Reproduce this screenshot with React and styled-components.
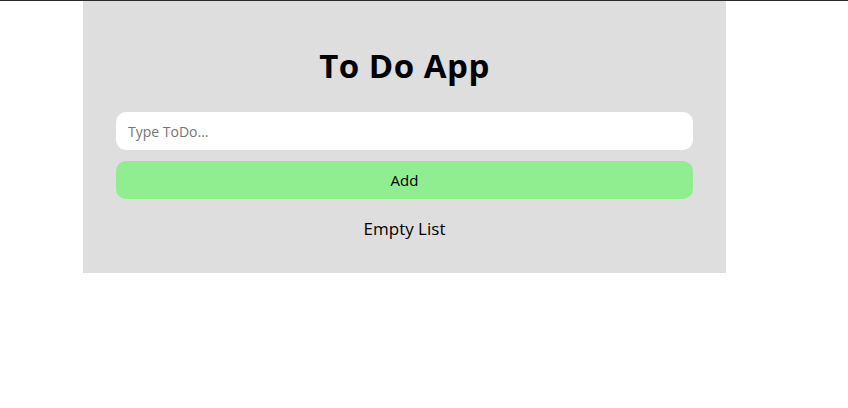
import React, { useState } from 'react';
import styled, { createGlobalStyle } from 'styled-components';

const GlobalStyle = createGlobalStyle`
    html, body {
        margin: 0;
        padding: 0;
        background: #ffffff;
    }
    body {
        font-family: "Open Sans", "Noto Sans", sans-serif;
        border-top: 1px solid #2b2b2b;
    }
`;

const Page = styled.div`
    padding-left: 83px;
`;

const Panel = styled.div`
    width: 643px;
    box-sizing: border-box;
    background: #dedede;
    padding: 45px 33px 32px;
    display: flex;
    flex-direction: column;
    align-items: stretch;
`;

const Title = styled.h1`
    margin: 0 0 26px;
    font-size: 33px;
    line-height: 40px;
    letter-spacing: 0.5px;
    font-weight: 700;
    text-align: center;
    color: #000;
`;

const Input = styled.input`
    height: 38px;
    box-sizing: border-box;
    border: none;
    border-radius: 10px;
    padding: 0 12px;
    font-family: inherit;
    font-size: 14px;
    background: #fff;
    outline: none;

    &::placeholder {
        color: #757575;
    }
`;

const Button = styled.button`
    margin-top: 11px;
    height: 38px;
    border: none;
    border-radius: 10px;
    background: ${props => props.color || '#90ee90'};
    font-family: inherit;
    font-size: 15px;
    color: #000;
    cursor: pointer;
`;

const Empty = styled.p`
    margin: 18px 0 0;
    font-size: 17px;
    line-height: 24px;
    text-align: center;
    color: #000;
`;

export default function App() {
    const [todo, setTodo] = useState('');
    const [todos, setTodos] = useState([]);

    const add = () => {
        if (!todo.trim()) return;
        setTodos([...todos, todo]);
        setTodo('');
    };

    return (
        <>
            <GlobalStyle />
            <Page>
                <Panel>
                    <Title>To Do App</Title>
                    <Input
                        placeholder="Type ToDo..."
                        value={todo}
                        onChange={e => setTodo(e.target.value)}
                    />
                    <Button onClick={add}>Add</Button>
                    {todos.length === 0 ? (
                        <Empty>Empty List</Empty>
                    ) : (
                        todos.map((el, i) => <Empty key={i}>{el}</Empty>)
                    )}
                </Panel>
            </Page>
        </>
    );
}
